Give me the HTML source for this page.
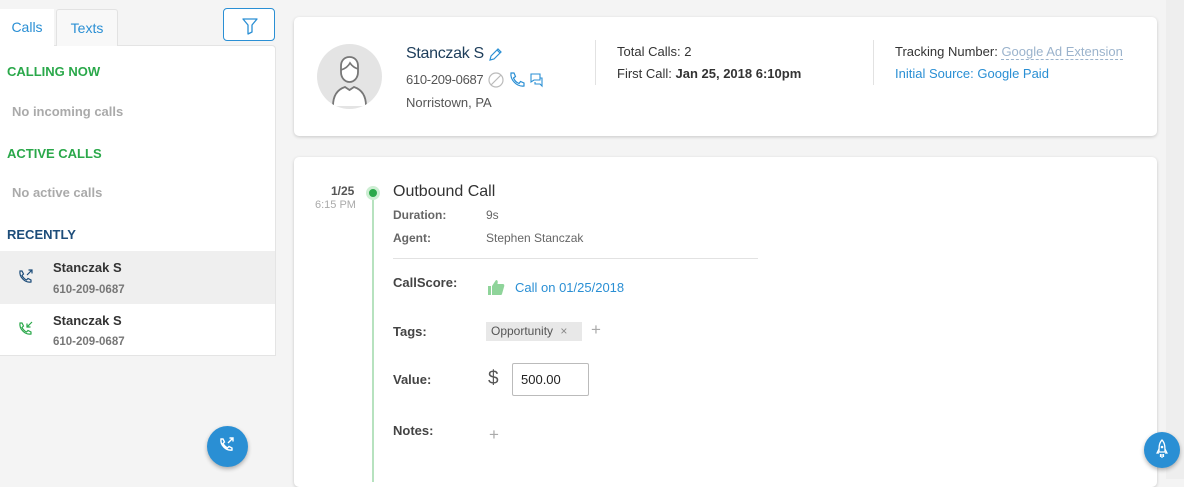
<!DOCTYPE html>
<html><head><meta charset="utf-8"><style>
*{margin:0;padding:0;box-sizing:border-box}
body{width:1184px;height:479px;overflow:hidden;background:#f4f4f4;font-family:"Liberation Sans",sans-serif;position:relative;color:#333}
.abs{position:absolute}
.tab{position:absolute;top:9px;height:37px;font-size:14px;color:#2a8fd4;text-align:center;line-height:36px}
.sec{position:absolute;left:7px;font-size:13px;font-weight:bold}
.gray{position:absolute;left:12px;font-size:13px;color:#aaa;font-weight:bold}
.card{position:absolute;left:294px;width:863px;background:#fff;border-radius:5px;box-shadow:0 1px 3px rgba(0,0,0,.18)}
.lbl{position:absolute;left:393px;font-size:13px;color:#444;font-weight:bold}
.sm{font-size:12px;color:#666}
</style></head><body>
<div class="abs" style="left:1166px;top:0;width:18px;height:479px;background:#eeeeee"></div>
<!-- left panel -->
<div class="abs" style="left:0;top:45px;width:276px;height:311px;background:#fff;border:1px solid #e4e4e4;border-left:none;border-radius:0 4px 0 0"></div>
<div class="tab" style="left:0;width:54px;background:#fff">Calls</div>
<div class="tab" style="left:56px;width:62px;background:#f8f8f8;border:1px solid #e2e2e2;border-bottom:none;border-radius:3px 3px 0 0">Texts</div>
<div class="abs" style="left:223px;top:8px;width:52px;height:33px;border:1px solid #2a8fd4;border-radius:4px;background:#fff">
<svg width="52" height="33" viewBox="0 0 52 33"><path d="M19 10h14l-5 6v7l-4 2v-9z" fill="none" stroke="#2a8fd4" stroke-width="1.3" stroke-linejoin="round"/></svg></div>
<div class="sec" style="top:64px;color:#2aa84a">CALLING NOW</div>
<div class="gray" style="top:104px">No incoming calls</div>
<div class="sec" style="top:146px;color:#2aa84a">ACTIVE CALLS</div>
<div class="gray" style="top:185px">No active calls</div>
<div class="sec" style="top:227px;color:#1d4d7a">RECENTLY</div>
<div class="abs" style="left:0;top:251px;width:275px;height:53px;background:#efefef"></div>
<svg class="abs" style="left:16px;top:268px" width="18" height="18" viewBox="0 0 18 18"><path d="M4 3l2 0 1.5 3-1.5 1.5c1 2 2.5 3.5 4.5 4.5L12 10.5l3 1.5v2c-6 1-12-5-11-11z" fill="none" stroke="#1d4d7a" stroke-width="1.2"/><path d="M11 7l5-5M12.5 2H16v3.5" fill="none" stroke="#1d4d7a" stroke-width="1.2"/></svg>
<div class="abs" style="left:53px;top:260px;font-size:13px;font-weight:bold;color:#333">Stanczak S</div>
<div class="abs" style="left:53px;top:284px;font-size:11.5px;font-weight:bold;color:#777">610-209-0687</div>
<svg class="abs" style="left:16px;top:320px" width="18" height="18" viewBox="0 0 18 18"><path d="M4 3l2 0 1.5 3-1.5 1.5c1 2 2.5 3.5 4.5 4.5L12 10.5l3 1.5v2c-6 1-12-5-11-11z" fill="none" stroke="#2aa84a" stroke-width="1.2"/><path d="M16 2l-5 5M11 3.5V7h3.5" fill="none" stroke="#2aa84a" stroke-width="1.2"/></svg>
<div class="abs" style="left:53px;top:313px;font-size:13px;font-weight:bold;color:#333">Stanczak S</div>
<div class="abs" style="left:53px;top:336px;font-size:11.5px;font-weight:bold;color:#777">610-209-0687</div>
<div class="abs" style="left:207px;top:426px;width:41px;height:41px;border-radius:50%;background:#2a8fd4;box-shadow:0 2px 4px rgba(0,0,0,.3)">
<svg width="41" height="41" viewBox="0 0 41 41"><path d="M14 13l2 0 1.5 3-1.5 1.5c1 2 2.5 3.5 4.5 4.5L22 20.5l3 1.5v2c-6 1-12-5-11-11z" fill="none" stroke="#fff" stroke-width="1.4"/><path d="M21 17l5-5M22.5 12H26v3.5" fill="none" stroke="#fff" stroke-width="1.4"/></svg></div>
<!-- card 1 -->
<div class="card" style="top:17px;height:119px"></div>
<div class="abs" style="left:317px;top:44px;width:65px;height:65px;border-radius:50%;background:#e4e4e4;overflow:hidden">
<svg width="65" height="65" viewBox="0 0 65 65"><path d="M24 22c0-6 4-9 8.5-9s8.5 3 8.5 9v6c0 6-4 10-8.5 10S24 34 24 28z" fill="#fff" stroke="#777" stroke-width="1.8"/><path d="M24 26c3-1 7-3 9-7 2 3 5 5 8 6" fill="none" stroke="#777" stroke-width="1.6"/><path d="M16 62c0-12 6-17 12-19l4.5 3 4.5-3c6 2 12 7 12 19" fill="#fff" stroke="#777" stroke-width="1.8"/></svg></div>
<div class="abs" style="left:406px;top:45px;font-size:16px;color:#1d3d5a;letter-spacing:-0.3px">Stanczak S</div>
<svg class="abs" style="left:488px;top:47px" width="15" height="15" viewBox="0 0 15 15"><path d="M2 13l1-4 7-7 3 3-7 7z M9 3l3 3" fill="none" stroke="#2a8fd4" stroke-width="1.2"/></svg>
<div class="abs" style="left:406px;top:72px;font-size:13px;color:#555;letter-spacing:-0.3px">610-209-0687</div>
<svg class="abs" style="left:488px;top:71px" width="60" height="18" viewBox="0 0 60 18"><circle cx="8" cy="9" r="7" fill="none" stroke="#bbb" stroke-width="1.2"/><path d="M3 14L13 4" stroke="#bbb" stroke-width="1.2"/><path d="M23 2l3 0 1.5 3.5-2 1.5c1 2.5 3 4.5 5.5 5.5l1.5-2 3.5 1.5v3c-7 1-14-6-13-13z" fill="none" stroke="#2a8fd4" stroke-width="1.2"/><path d="M43 3h9v6h-6l-3 2z M47 11v2h5l2 2v-8h-2" fill="none" stroke="#2a8fd4" stroke-width="1.1"/></svg>
<div class="abs" style="left:406px;top:95px;font-size:13px;color:#555">Norristown, PA</div>
<div class="abs" style="left:595px;top:40px;width:1px;height:45px;background:#e2e2e2"></div>
<div class="abs" style="left:617px;top:44px;font-size:13px;color:#333">Total Calls: 2</div>
<div class="abs" style="left:617px;top:66px;font-size:13px;color:#333">First Call: <b>Jan 25, 2018 6:10pm</b></div>
<div class="abs" style="left:873px;top:40px;width:1px;height:45px;background:#e2e2e2"></div>
<div class="abs" style="left:895px;top:44px;font-size:13px;color:#333">Tracking Number: <span style="color:#9bb3cc;border-bottom:1px dashed #9bb3cc">Google Ad Extension</span></div>
<div class="abs" style="left:895px;top:66px;font-size:13px;color:#2a8fd4">Initial Source: Google Paid</div>
<!-- card 2 -->
<div class="card" style="top:157px;height:330px"></div>
<div class="abs" style="left:331px;top:184px;font-size:12px;color:#555;font-weight:bold">1/25</div>
<div class="abs" style="left:315px;top:199px;font-size:11px;color:#aaa">6:15 PM</div>
<div class="abs" style="left:372px;top:192px;width:2px;height:290px;background:#b7e2bf"></div>
<div class="abs" style="left:366px;top:186px;width:14px;height:14px;border-radius:50%;background:#2aa84a;border:3px solid #cdeed3"></div>
<div class="abs" style="left:393px;top:183px;font-size:16px;color:#333">Outbound Call</div>
<div class="abs sm" style="left:393px;top:208px;font-weight:bold">Duration:</div>
<div class="abs sm" style="left:486px;top:208px">9s</div>
<div class="abs sm" style="left:393px;top:231px;font-weight:bold">Agent:</div>
<div class="abs sm" style="left:486px;top:231px">Stephen Stanczak</div>
<div class="abs" style="left:393px;top:258px;width:365px;height:1px;background:#e2e2e2"></div>
<div class="lbl" style="top:275px">CallScore:</div>
<svg class="abs" style="left:487px;top:279px" width="18" height="17" viewBox="0 0 18 17"><rect x="1" y="7" width="3" height="9" fill="#8fd49a"/><path d="M5 7l4-6c2 0 2 2 1.5 4H16c1.5 0 1.5 2 1 3l-2 7c-.3 1-1 1-2 1H5z" fill="#8fd49a"/></svg>
<div class="abs" style="left:515px;top:280px;font-size:13px;color:#2a8fd4">Call on 01/25/2018</div>
<div class="lbl" style="top:324px">Tags:</div>
<div class="abs" style="left:486px;top:322px;width:96px;height:19px;background:#e8e8e8;font-size:12px;color:#555;line-height:19px;padding-left:5px">Opportunity <span style="margin-left:4px;color:#888">×</span></div>
<div class="abs" style="left:591px;top:320px;font-size:17px;color:#aaa">+</div>
<div class="lbl" style="top:372px">Value:</div>
<div class="abs" style="left:488px;top:368px;font-size:19px;color:#555">$</div>
<div class="abs" style="left:512px;top:363px;width:77px;height:33px;border:1px solid #bbb;border-radius:2px;font-size:13px;color:#222;line-height:31px;padding-left:8px">500.00</div>
<div class="lbl" style="top:423px">Notes:</div>
<div class="abs" style="left:489px;top:425px;font-size:17px;color:#aaa">+</div>
<div class="abs" style="left:1144px;top:432px;width:36px;height:36px;border-radius:50%;background:#2a8fd4;box-shadow:0 2px 4px rgba(0,0,0,.3)">
<svg width="36" height="36" viewBox="0 0 36 36"><path d="M18 8c3 3 3 7 3 12h-6c0-5 0-9 3-12z" fill="none" stroke="#fff" stroke-width="1.3"/><circle cx="18" cy="15" r="1.3" fill="#fff"/><path d="M15 17l-2 4h2M21 17l2 4h-2M16.5 22v3M18 22v4M19.5 22v3" fill="none" stroke="#fff" stroke-width="1.2"/></svg></div>
</body></html>
